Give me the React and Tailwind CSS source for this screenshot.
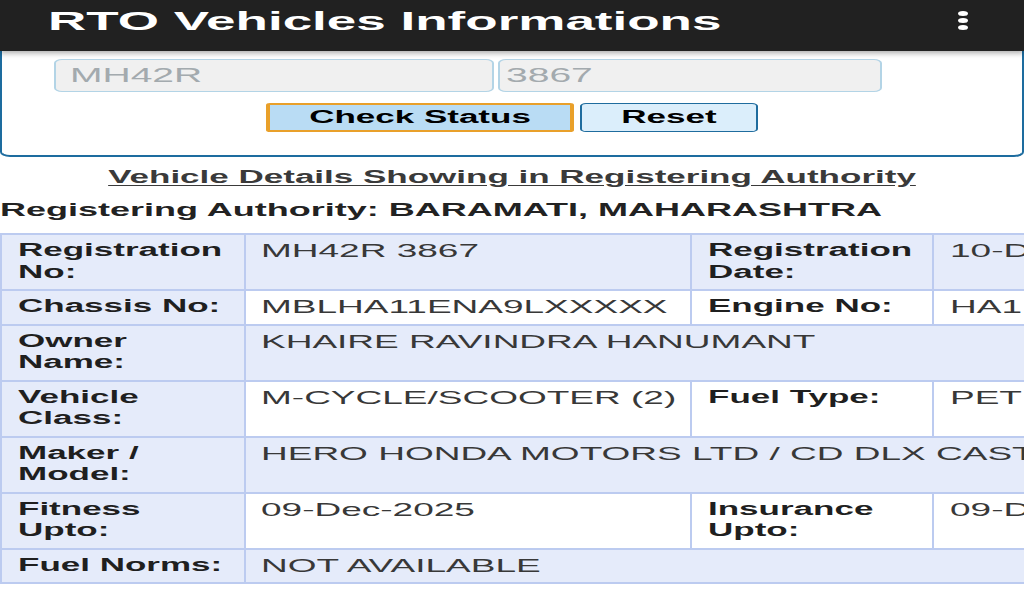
import React from 'react';

const font = "font-['Liberation_Sans',Arial,sans-serif]";

const rows = [
  { a: 'Registration No:', b: 'MH42R 3867', c: 'Registration Date:', d: '10-Dec-2010', blue: true },
  { a: 'Chassis No:', b: 'MBLHA11ENA9LXXXXX', c: 'Engine No:', d: 'HA1' },
  { a: 'Owner Name:', b: 'KHAIRE RAVINDRA HANUMANT', blue: true },
  { a: 'Vehicle Class:', b: 'M-CYCLE/SCOOTER (2)', c: 'Fuel Type:', d: 'PETROL' },
  { a: 'Maker / Model:', b: 'HERO HONDA MOTORS LTD / CD DLX CAST WHEEL', blue: true },
  { a: 'Fitness Upto:', b: '09-Dec-2025', c: 'Insurance Upto:', d: '09-Dec-2021' },
  { a: 'Fuel Norms:', b: 'NOT AVAILABLE', blue: true },
];

const cell = 'border-y-2 border-x-[1.5px] border-[#bccbf0] align-top pl-2 pr-1 pt-[5px] pb-[6px] leading-[21.5px]';
const label = `${cell} text-[17.5px] font-bold text-[#1f1f1f]`;
const value = `${cell} text-[18.5px] text-[#383838] whitespace-nowrap`;

function DetailsTable() {
  return (
    <table className="mt-[11px] w-[590px] table-fixed border-collapse">
      <colgroup>
        <col className="w-[121.5px]" />
        <col className="w-[223.5px]" />
        <col className="w-[121px]" />
        <col />
      </colgroup>
      <tbody>
        {rows.map((r) => (
          <tr key={r.a} className={r.blue ? 'bg-[#e5ebfa]' : 'bg-white'}>
            <td className={`${label} bg-[#e5ebfa]`}>{r.a}</td>
            {r.c ? (
              <>
                <td className={value}>{r.b}</td>
                <td className={label}>{r.c}</td>
                <td className={value}>{r.d}</td>
              </>
            ) : (
              <td colSpan={3} className={value}>{r.b}</td>
            )}
          </tr>
        ))}
      </tbody>
    </table>
  );
}

export default function App() {
  return (
    <div className={`w-[1024px] h-[600px] overflow-hidden bg-white ${font}`}>
      <div className="w-[512px] origin-top-left scale-x-200">
        <header className="relative z-10 h-[51px] bg-[#212121] flex items-start justify-between pl-6 pr-[28px] shadow-[0_2px_4px_rgba(0,0,0,0.35)]">
          <h1 className="pt-[6px] text-[26.5px] leading-[30px] font-bold text-white">RTO Vehicles Informations</h1>
          <div className="flex flex-col gap-[2px] pt-[11px]">
            <span className="w-[5px] h-[5px] rounded-full bg-white" />
            <span className="w-[5px] h-[5px] rounded-full bg-white" />
            <span className="w-[5px] h-[5px] rounded-full bg-white" />
          </div>
        </header>

        <section className="border-x border-b-2 border-[#1d6c9f] rounded-b-[5px] pt-2 pb-[23px]">
          <div className="flex gap-[2px] pl-[26px]">
            <div className="w-[220px] h-[33px] rounded-[4px] border border-[#b3d4e6] bg-[#f0f0f0] pl-[7px] flex items-center text-[19.5px] text-[#a3aaae]">
              MH42R
            </div>
            <div className="w-[192px] h-[33px] rounded-[4px] border border-[#b3d4e6] bg-[#f0f0f0] pl-[3px] flex items-center text-[19.5px] text-[#a3aaae]">
              3867
            </div>
          </div>
          <div className="mt-[11px] flex justify-center gap-[3px]">
            <button className="w-[154px] h-[29px] rounded-[2px] border-2 border-[#e9a02a] bg-[#b9dcf4] text-[17.5px] font-bold text-black leading-none">
              Check Status
            </button>
            <button className="w-[89px] h-[29px] rounded-[3px] border border-[#1f6c9e] bg-[#dbeefb] text-[17.5px] font-bold text-black leading-none">
              Reset
            </button>
          </div>
        </section>

        <h2 className="mt-2 text-center text-[17.5px] leading-[24px] font-bold text-[#3a3a3a] underline underline-offset-2">
          Vehicle Details Showing in Registering Authority
        </h2>
        <p className="mt-[9px] text-[18px] leading-[24px] font-bold text-[#222]">
          Registering Authority: BARAMATI, MAHARASHTRA
        </p>

        <DetailsTable />
      </div>
    </div>
  );
}
